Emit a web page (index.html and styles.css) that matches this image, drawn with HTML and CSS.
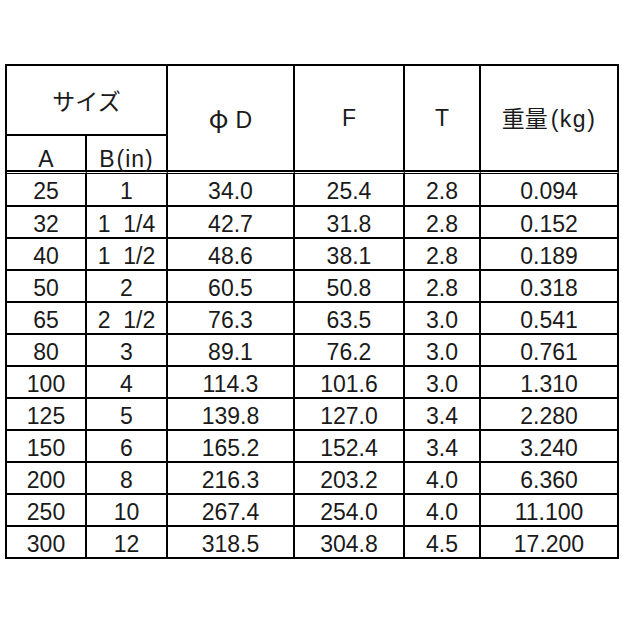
FILE: index.html
```
<!DOCTYPE html>
<html lang="ja">
<head>
<meta charset="utf-8">
<link rel="stylesheet" href="styles.css">
</head>
<body>
<table class="spec">
  <colgroup>
    <col class="c-a"><col class="c-b"><col class="c-d"><col class="c-f"><col class="c-t"><col class="c-w">
  </colgroup>
  <thead>
    <tr class="h1">
      <th colspan="2" class="jp size">サイズ</th>
      <th rowspan="2" class="hd"><span class="phi">φ</span>D</th>
      <th rowspan="2" class="hd">F</th>
      <th rowspan="2" class="hd">T</th>
      <th rowspan="2" class="jp wt">重量<span class="lat">(kg)</span></th>
    </tr>
    <tr class="h2">
      <th class="sub">A</th>
      <th class="sub">B<span class="par">(in)</span></th>
    </tr>
  </thead>
  <tbody>
    <tr class="first"><td>25</td><td>1</td><td>34.0</td><td>25.4</td><td>2.8</td><td>0.094</td></tr>
    <tr><td>32</td><td>1&nbsp;&nbsp;1/4</td><td>42.7</td><td>31.8</td><td>2.8</td><td>0.152</td></tr>
    <tr><td>40</td><td>1&nbsp;&nbsp;1/2</td><td>48.6</td><td>38.1</td><td>2.8</td><td>0.189</td></tr>
    <tr><td>50</td><td>2</td><td>60.5</td><td>50.8</td><td>2.8</td><td>0.318</td></tr>
    <tr><td>65</td><td>2&nbsp;&nbsp;1/2</td><td>76.3</td><td>63.5</td><td>3.0</td><td>0.541</td></tr>
    <tr><td>80</td><td>3</td><td>89.1</td><td>76.2</td><td>3.0</td><td>0.761</td></tr>
    <tr><td>100</td><td>4</td><td>114.3</td><td>101.6</td><td>3.0</td><td>1.310</td></tr>
    <tr><td>125</td><td>5</td><td>139.8</td><td>127.0</td><td>3.4</td><td>2.280</td></tr>
    <tr><td>150</td><td>6</td><td>165.2</td><td>152.4</td><td>3.4</td><td>3.240</td></tr>
    <tr><td>200</td><td>8</td><td>216.3</td><td>203.2</td><td>4.0</td><td>6.360</td></tr>
    <tr><td>250</td><td>10</td><td>267.4</td><td>254.0</td><td>4.0</td><td>11.100</td></tr>
    <tr><td>300</td><td>12</td><td>318.5</td><td>304.8</td><td>4.5</td><td>17.200</td></tr>
  </tbody>
</table>
</body>
</html>
```
FILE: styles.css
```
html, body {
  margin: 0;
  padding: 0;
  background: #fff;
}

body {
  padding: 64px 0 0 5px;
  font-family: "Liberation Sans", "Noto Sans CJK JP", sans-serif;
  color: #1a1a1a;
}

.spec {
  border-collapse: separate;
  border-spacing: 0;
  table-layout: fixed;
  width: 614px;
  border-top: 2px solid #000;
  border-left: 2px solid #000;
}

.c-a { width: 80px; }
.c-b { width: 81px; }
.c-d { width: 127px; }
.c-f { width: 110px; }
.c-t { width: 76px; }
.c-w { width: 138px; }

.spec th,
.spec td {
  box-sizing: border-box;
  padding: 0;
  border-right: 2px solid #000;
  border-bottom: 2px solid #000;
  text-align: center;
  vertical-align: middle;
  font-weight: 400;
  font-size: 23px;
  letter-spacing: 0;
  line-height: 24px;
  white-space: nowrap;
}

.h1 th { height: 70px; }
.h2 th { height: 36px; }

.jp {
  font-family: "Noto Sans CJK JP", sans-serif;
}

.size {
  font-size: 26px;
  letter-spacing: 1.5px;
  padding-left: 4px;
}

.wt {
  font-size: 24px;
  letter-spacing: 3px;
  padding-left: 0;
}

.wt .lat {
  font-family: "Liberation Sans", sans-serif;
  font-size: 23px;
  letter-spacing: 1.5px;
  margin-left: 3px;
}

.phi {
  font-family: "Noto Sans CJK JP", sans-serif;
  font-size: 26px;
  margin-right: 7px;
}

.par {
  letter-spacing: 1px;
  margin-left: 2px;
}

.spec thead .sub {
  padding-top: 12px;
  line-height: 20px;
}

.spec tbody td {
  height: 32px;
  padding-top: 3px;
}

.spec tbody .first td {
  height: 35px;
  border-top: 1px solid #fff;
  box-shadow: inset 0 1px 0 #000;
  padding-top: 4px;
}
```
